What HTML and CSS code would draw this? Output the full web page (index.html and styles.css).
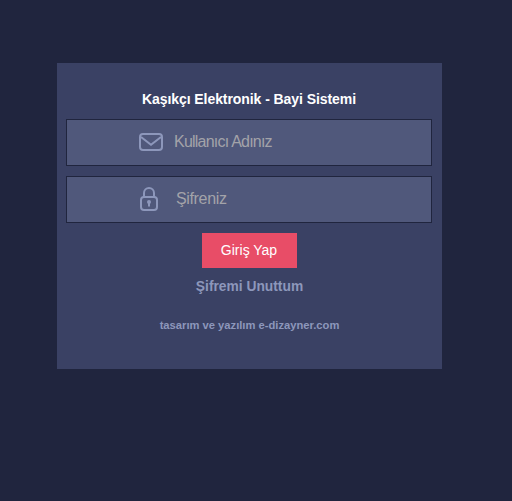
FILE: index.html
```
<!DOCTYPE html>
<html lang="tr">
<head>
    <meta charset="UTF-8">
    <meta name="viewport" content="width=device-width, initial-scale=1.0">
    <title>Kaşıkçı Elektronik - Bayi Sistemi</title>
    <link rel="stylesheet" href="styles.css">
</head>
<body>
    <form class="login">
        <h1 class="title">Kaşıkçı Elektronik - Bayi Sistemi</h1>
        <label class="field field-user">
            <svg class="icon" width="24" height="18" viewBox="0 0 24 18">
                <rect x="1" y="1" width="22" height="16" rx="3"/>
                <path d="M2 4 L12 11.7 L22 4"/>
            </svg>
            <input type="text" placeholder="Kullanıcı Adınız">
        </label>
        <label class="field field-pass">
            <svg class="icon" width="18" height="24" viewBox="0 0 18 24">
                <path d="M4 10 V6 a5 5 0 0 1 10 0 V10"/>
                <rect x="1" y="10" width="16" height="13" rx="3"/>
                <circle class="hole" cx="9" cy="15" r="2"/>
                <path d="M9 15 V19.5"/>
            </svg>
            <input type="password" placeholder="Şifreniz">
        </label>
        <button class="submit" type="button">Giriş Yap</button>
        <a class="forgot" href="#">Şifremi Unuttum</a>
        <p class="credit">tasarım ve yazılım e-dizayner.com</p>
    </form>
</body>
</html>
```

FILE: styles.css
```
* {
    box-sizing: border-box;
}

body {
    margin: 0;
    min-height: 100vh;
    padding: 63px 0 0 57px;
    background: #20253e;
    font-family: "Liberation Sans", Arial, sans-serif;
}

.login {
    display: flex;
    flex-direction: column;
    align-items: center;
    width: 385px;
    height: 306px;
    padding: 28px 10px 0 9px;
    background: #3a4164;
}

.title {
    margin: 0 0 12px;
    font-size: 14px;
    line-height: 16px;
    letter-spacing: -0.07px;
    color: #fff;
}

.field {
    display: flex;
    align-items: center;
    width: 366px;
    height: 47px;
    margin-bottom: 10px;
    padding: 0 0 2px 72px;
    background: #50587b;
    border: 1px solid #20253e;
}

.icon {
    flex: none;
    fill: none;
    stroke: #8d97bb;
    stroke-width: 2;
}

.hole {
    fill: #8d97bb;
    stroke: none;
}

.field input {
    width: 200px;
    margin-left: 11px;
    padding: 1px 0 0;
    border: 0;
    outline: 0;
    background: none;
    font-family: inherit;
    font-size: 16px;
    letter-spacing: -0.78px;
    color: #fff;
}

.field-pass {
    padding-left: 73px;
}

.field-pass input {
    margin-left: 18px;
    letter-spacing: -0.35px;
}

.field input::placeholder {
    color: #a3a3a9;
}

.submit {
    width: 95px;
    height: 35px;
    padding: 0 0 2px;
    border: 0;
    background: #e84d67;
    font-family: inherit;
    font-size: 14px;
    color: #fff;
}

.forgot {
    margin: 11px 0 0 1px;
    font-size: 13.8px;
    font-weight: bold;
    line-height: 16px;
    text-decoration: none;
    color: #8d97bb;
}

.credit {
    margin: 23px 0 0 1px;
    font-size: 11.2px;
    font-weight: bold;
    line-height: 14px;
    color: #8d97bb;
}
```
